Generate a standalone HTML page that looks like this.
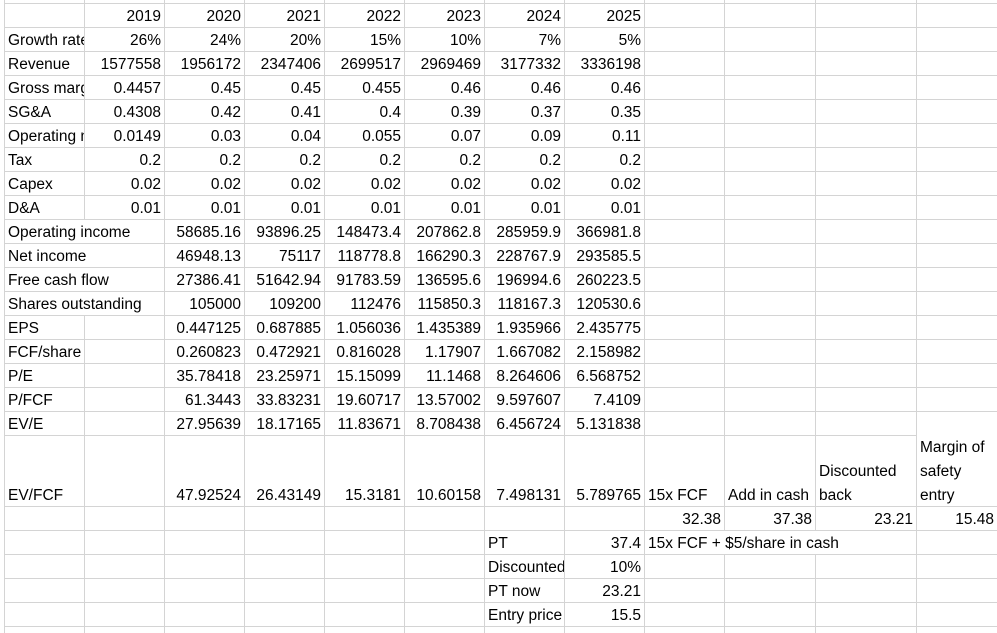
<!DOCTYPE html>
<html><head><meta charset="utf-8"><style>
html,body{margin:0;background:#fff;width:997px;height:633px;overflow:hidden}
body{position:relative;font-family:"Liberation Sans",Arial,sans-serif;font-size:15.5px;color:#000}
.h{position:absolute;height:1px;background:#d4d4d4}
.v{position:absolute;width:1px;background:#d4d4d4}
.c{position:absolute;white-space:nowrap;overflow:hidden;line-height:26px;background:#fff;box-sizing:border-box;padding:0 3px}
.r{text-align:right}
</style></head><body>
<script>
var X=[4,84,164,244,324,404,484,564,644,724,815,916,1000];
var Y=[3];for(var k=1;k<=18;k++)Y.push(3+24*k);Y.push(506,530,554,578,602,626);
var h='';
for(var i=0;i<Y.length;i++)h+='<div class="h" style="left:4px;width:993px;top:'+Y[i]+'px"></div>';
for(var j=0;j<X.length;j++)h+='<div class="v" style="left:'+X[j]+'px;top:0;height:633px"></div>';
var rows=[
["","2019","2020","2021","2022","2023","2024","2025"],
["Growth rate","26%","24%","20%","15%","10%","7%","5%"],
["Revenue","1577558","1956172","2347406","2699517","2969469","3177332","3336198"],
["Gross margin","0.4457","0.45","0.45","0.455","0.46","0.46","0.46"],
["SG&amp;A","0.4308","0.42","0.41","0.4","0.39","0.37","0.35"],
["Operating margin","0.0149","0.03","0.04","0.055","0.07","0.09","0.11"],
["Tax","0.2","0.2","0.2","0.2","0.2","0.2","0.2"],
["Capex","0.02","0.02","0.02","0.02","0.02","0.02","0.02"],
["D&amp;A","0.01","0.01","0.01","0.01","0.01","0.01","0.01"],
["*Operating income","","58685.16","93896.25","148473.4","207862.8","285959.9","366981.8"],
["*Net income","","46948.13","75117","118778.8","166290.3","228767.9","293585.5"],
["*Free cash flow","","27386.41","51642.94","91783.59","136595.6","196994.6","260223.5"],
["*Shares outstanding","","105000","109200","112476","115850.3","118167.3","120530.6"],
["EPS","","0.447125","0.687885","1.056036","1.435389","1.935966","2.435775"],
["FCF/share","","0.260823","0.472921","0.816028","1.17907","1.667082","2.158982"],
["P/E","","35.78418","23.25971","15.15099","11.1468","8.264606","6.568752"],
["P/FCF","","61.3443","33.83231","19.60717","13.57002","9.597607","7.4109"],
["EV/E","","27.95639","18.17165","11.83671","8.708438","6.456724","5.131838"],
["EV/FCF","","47.92524","26.43149","15.3181","10.60158","7.498131","5.789765"]
];
function cell(x,y,w,t,right){h+='<div class="c'+(right?' r':'')+'" style="left:'+(x+1)+'px;top:'+(y+1)+'px;width:'+(w-1)+'px;height:23px">'+t+'</div>';}
for(var r=0;r<rows.length;r++){
 var y=Y[r]; if(r==18) y=Y[18]+47;
 for(var c=0;c<8;c++){
  var t=rows[r][c];
  if(c==0&&t.charAt(0)=='*'){cell(X[0],y,160,t.slice(1),false);continue;}
  if(t==="")continue;
  cell(X[c],y,X[c+1]-X[c],t,c>0);
 }
}
var y=Y[18]+47;
cell(X[8],y,80,"15x FCF",false);
cell(X[9],y,91,"Add in cash",false);
cell(X[10],y-24,101,"Discounted",false);
cell(X[10],y,101,"back",false);
cell(X[11],y-48,81,"Margin of",false);
cell(X[11],y-24,81,"safety",false);
cell(X[11],y,81,"entry",false);
cell(X[8],Y[19],80,"32.38",true);
cell(X[9],Y[19],91,"37.38",true);
cell(X[10],Y[19],101,"23.21",true);
cell(X[11],Y[19],81,"15.48",true);
var b=[["PT","37.4"],["Discounted","10%"],["PT now","23.21"],["Entry price","15.5"]];
for(var i=0;i<4;i++){cell(X[6],Y[20+i],80,b[i][0],false);cell(X[7],Y[20+i],80,b[i][1],true);}
cell(X[8],Y[20],272,"15x FCF + $5/share in cash",false);
document.write(h);
</script>
</body></html>
